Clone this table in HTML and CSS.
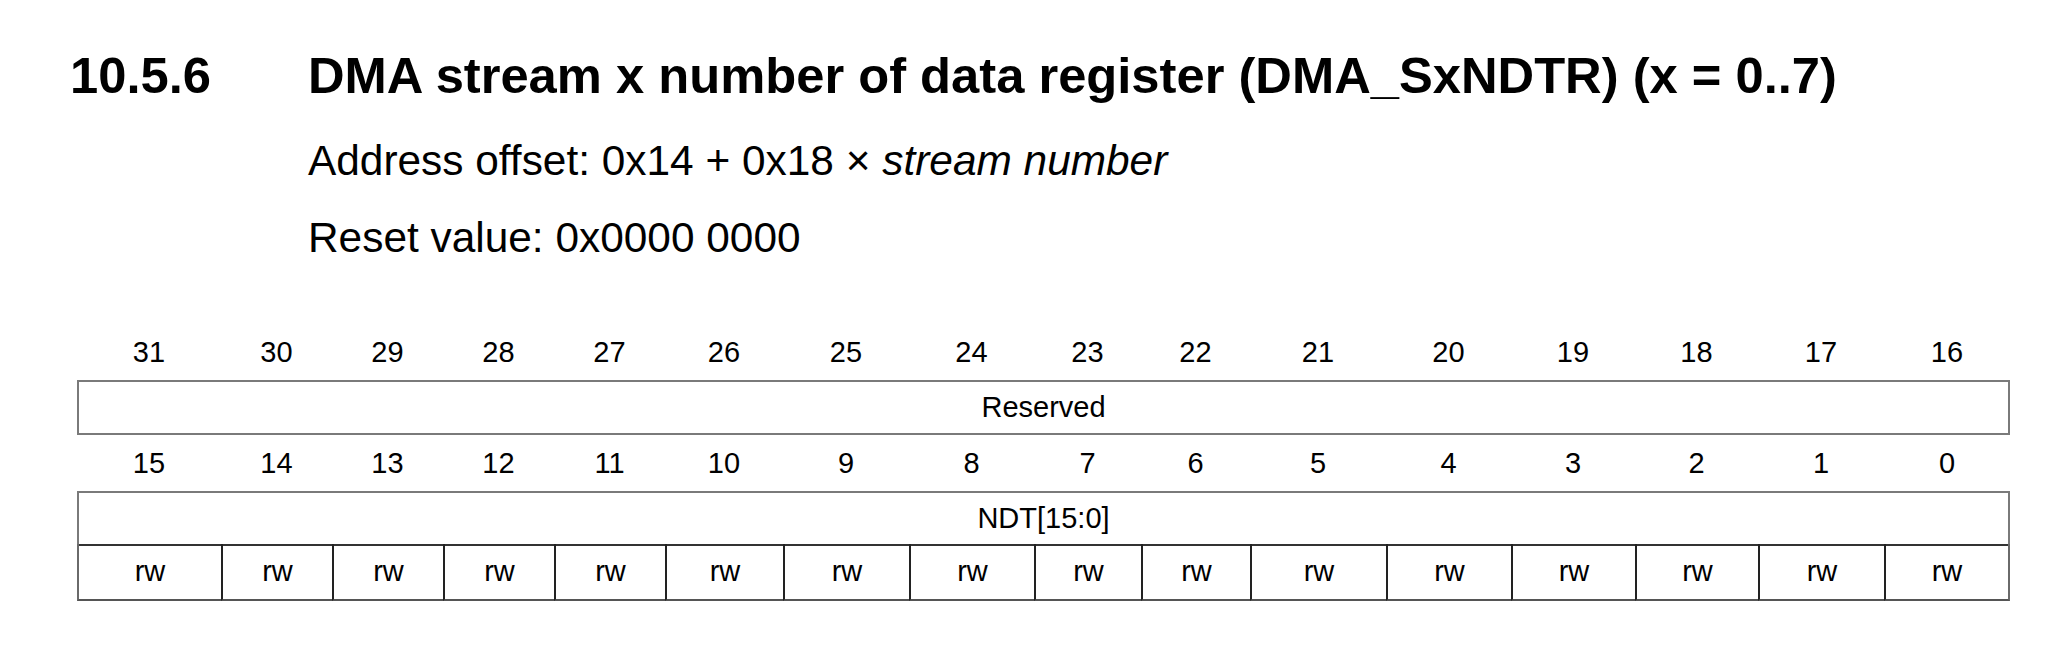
FILE: index.html
```html
<!DOCTYPE html>
<html>
<head>
<meta charset="utf-8">
<link rel="stylesheet" href="styles.css">
</head>
<body>
<div class="page">
  <h2 class="heading"><span class="num">10.5.6</span><span class="title">DMA stream x number of data register (DMA_SxNDTR) (x = 0..7)</span></h2>
  <div class="meta">
    <p class="line">Address offset: 0x14 + 0x18 × <i>stream number</i></p>
    <p class="line">Reset value: 0x0000 0000</p>
  </div>
  <div class="reg">
    <div class="bit">31</div><div class="bit">30</div><div class="bit">29</div><div class="bit">28</div>
    <div class="bit">27</div><div class="bit">26</div><div class="bit">25</div><div class="bit">24</div>
    <div class="bit">23</div><div class="bit">22</div><div class="bit">21</div><div class="bit">20</div>
    <div class="bit">19</div><div class="bit">18</div><div class="bit">17</div><div class="bit">16</div>
    <div class="field">Reserved</div>
    <div class="bit">15</div><div class="bit">14</div><div class="bit">13</div><div class="bit">12</div>
    <div class="bit">11</div><div class="bit">10</div><div class="bit">9</div><div class="bit">8</div>
    <div class="bit">7</div><div class="bit">6</div><div class="bit">5</div><div class="bit">4</div>
    <div class="bit">3</div><div class="bit">2</div><div class="bit">1</div><div class="bit">0</div>
    <div class="field field-top">NDT[15:0]</div>
    <div class="acc first">rw</div><div class="acc">rw</div><div class="acc">rw</div><div class="acc">rw</div>
    <div class="acc">rw</div><div class="acc">rw</div><div class="acc">rw</div><div class="acc">rw</div>
    <div class="acc">rw</div><div class="acc">rw</div><div class="acc">rw</div><div class="acc">rw</div>
    <div class="acc">rw</div><div class="acc">rw</div><div class="acc">rw</div><div class="acc last">rw</div>
  </div>
</div>
</body>
</html>
```

FILE: styles.css
```css
html, body {
  margin: 0;
  padding: 0;
  background: #ffffff;
}

body {
  font-family: "Liberation Sans", Arial, Helvetica, sans-serif;
  color: #000;
}

.page {
  padding: 46px 0 0 70px;
}

.heading {
  display: flex;
  margin: 0;
  font-size: 50.7px;
  line-height: 60px;
  font-weight: bold;
}

.num {
  width: 238px;
  flex: none;
}

.meta {
  padding-left: 238px;
  margin-top: 31px;
}

.line {
  margin: 0 0 29px 0;
  font-size: 42.4px;
  line-height: 48px;
}

.line i {
  font-style: italic;
}

.reg {
  margin-top: 62px;
  margin-left: 7px;
  display: grid;
  grid-template-columns: 144px 111px 111px 111px 111px 118px 126px 125px 107px 109px 136px 125px 124px 123px 126px 126px;
  width: 1933px;
  font-size: 29px;
}

.bit {
  height: 56px;
  display: flex;
  align-items: center;
  justify-content: center;
}

.field {
  grid-column: 1 / -1;
  height: 55px;
  box-sizing: border-box;
  border: 2px solid #7a7a7a;
  display: flex;
  align-items: center;
  justify-content: center;
}

.field-top {
  border-bottom: 2px solid #333;
}

.acc {
  height: 57px;
  box-sizing: border-box;
  border-bottom: 2px solid #555;
  border-left: 2px solid #222;
  display: flex;
  align-items: center;
  justify-content: center;
  margin-top: -2px;
}

.acc.first {
  border-left: 2px solid #6a6a6a;
}

.acc.last {
  border-right: 2px solid #6a6a6a;
}
```
